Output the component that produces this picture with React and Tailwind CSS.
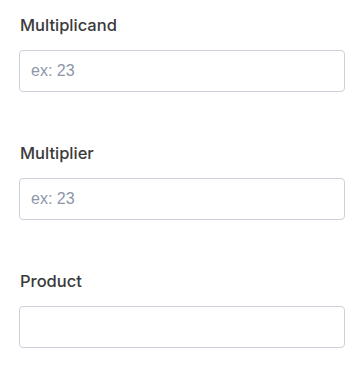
import React from 'react';

const fields = [
  { id: 'multiplicand', label: 'Multiplicand', placeholder: 'ex: 23' },
  { id: 'multiplier', label: 'Multiplier', placeholder: 'ex: 23' },
  { id: 'product', label: 'Product', placeholder: '' },
];

export default function App() {
  return (
    <div
      className="min-h-screen bg-white px-[19px] pt-[13px] flex flex-col gap-[49px]"
      style={{ fontFamily: 'Inter, "Noto Sans", sans-serif' }}
    >
      {fields.map((f) => (
        <div key={f.id} className="flex flex-col">
          <label htmlFor={f.id} className="pl-[1px] text-[16.5px] leading-6 font-medium text-[#3a3a3a]">
            {f.label}
          </label>
          <input
            id={f.id}
            type="text"
            placeholder={f.placeholder}
            className="mt-[13px] h-[42px] w-full rounded border border-[#cbd2dc] px-[11px] font-['Liberation_Sans',Arial,sans-serif] text-base text-[#374151] placeholder:text-[#8d97a8] outline-none"
          />
        </div>
      ))}
    </div>
  );
}
